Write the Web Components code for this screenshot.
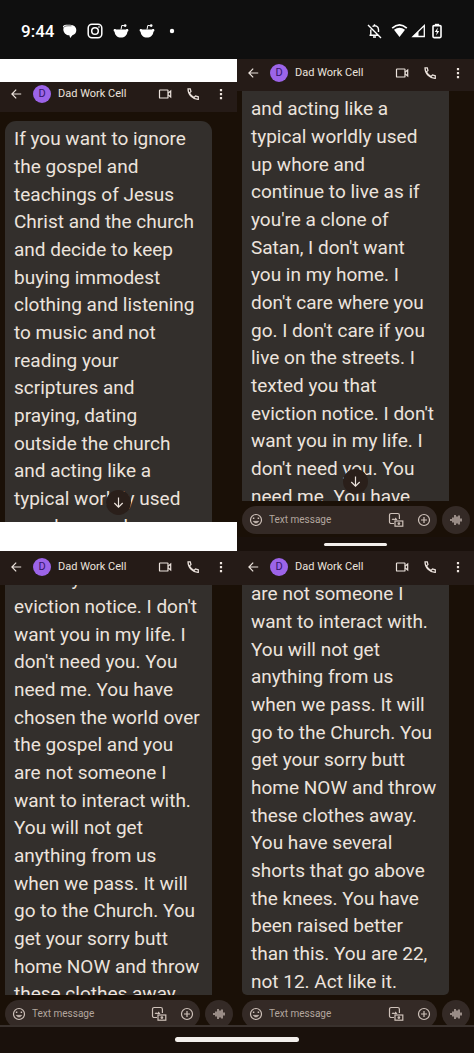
<!DOCTYPE html>
<html lang="en">
<head>
<meta charset="utf-8">
<meta name="viewport" content="width=device-width, initial-scale=1">
<title>Messages</title>
<style>
  html { background: #1a1007; }
  body { margin: 0; font-family: Roboto, "Noto Sans", sans-serif; color: #ece3dd; background: #1a1007; }
  main { display: grid; grid-template-columns: 1fr 1fr; }
  .cell { min-width: 0; background: #1a1007; }
  .first { background: #fff; padding: 23px 0 29px; }
  .first chat-header { --pad-top: 2px; --pad-bottom: 9px; }
  .second chat-header { --pad-top: 4px; --pad-bottom: 9px; }
</style>
</head>
<body>
<status-bar></status-bar>
<main>
  <section class="cell first">
    <chat-header name="Dad Work Cell"></chat-header>
    <chat-view style="--offset: 9px">
      <chat-bubble rounded="top" style="--lead: 4px">
        <p>If you want to ignore</p><p>the gospel and</p><p>teachings of Jesus</p><p>Christ and the church</p><p>and decide to keep</p><p>buying immodest</p><p>clothing and listening</p><p>to music and not</p><p>reading your</p><p>scriptures and</p><p>praying, dating</p><p>outside the church</p><p>and acting like a</p><p>typical worldly used</p><p>up whore and</p>
      </chat-bubble>
      <scroll-down slot="over"></scroll-down>
    </chat-view>
  </section>
  <section class="cell second">
    <chat-header name="Dad Work Cell"></chat-header>
    <chat-view>
      <chat-bubble style="--lead: 4px">
        <p>and acting like a</p><p>typical worldly used</p><p>up whore and</p><p>continue to live as if</p><p>you're a clone of</p><p>Satan, I don't want</p><p>you in my home. I</p><p>don't care where you</p><p>go. I don't care if you</p><p>live on the streets. I</p><p>texted you that</p><p>eviction notice. I don't</p><p>want you in my life. I</p><p>don't need you. You</p><p>need me. You have</p>
      </chat-bubble>
      <scroll-down slot="over"></scroll-down>
    </chat-view>
    <chat-composer></chat-composer>
    <home-bar style="--w: 63px; --h: 3px; --top: 4px; --bottom: 5px"></home-bar>
  </section>
  <section class="cell">
    <chat-header name="Dad Work Cell"></chat-header>
    <chat-view style="--offset: -20px">
      <chat-bubble>
        <p>texted you that</p><p>eviction notice. I don't</p><p>want you in my life. I</p><p>don't need you. You</p><p>need me. You have</p><p>chosen the world over</p><p>the gospel and you</p><p>are not someone I</p><p>want to interact with.</p><p>You will not get</p><p>anything from us</p><p>when we pass. It will</p><p>go to the Church. You</p><p>get your sorry butt</p><p>home NOW and throw</p><p>these clothes away.</p>
      </chat-bubble>
    </chat-view>
    <chat-composer cut></chat-composer>
  </section>
  <section class="cell">
    <chat-header name="Dad Work Cell"></chat-header>
    <chat-view style="--offset: -5px">
      <chat-bubble rounded="bottom">
        <p>are not someone I</p><p>want to interact with.</p><p>You will not get</p><p>anything from us</p><p>when we pass. It will</p><p>go to the Church. You</p><p>get your sorry butt</p><p>home NOW and throw</p><p>these clothes away.</p><p>You have several</p><p>shorts that go above</p><p>the knees. You have</p><p>been raised better</p><p>than this. You are 22,</p><p>not 12. Act like it.</p>
      </chat-bubble>
    </chat-view>
    <chat-composer cut></chat-composer>
  </section>
</main>
<home-bar style="--w: 124px; --h: 5px; --top: 10px; --bottom: 11px; --line: #39312d"></home-bar>

<script>
const define = (name, html) => customElements.define(name, class extends HTMLElement {
  constructor() {
    super();
    this.attachShadow({ mode: 'open' }).innerHTML = html;
  }
  connectedCallback() {
    const title = this.shadowRoot.querySelector('[data-name]');
    if (title) title.textContent = this.getAttribute('name');
  }
});

const reddit = `<svg width="16" height="16" viewBox="0 0 16 16"><path d="M.6 7.300C.6 6 2 5.600 3 6.400h10c1-.8 2.400-.4 2.400.9 0 .8-.5 1.200-1 1.500C14.200 12.300 11.500 14.600 8 14.600S1.800 12.300 1.600 8.800c-.5-.3-1-.7-1-1.500z" fill="#fff"/><path d="M8 6.500 8.800 2.400l3 .4" fill="none" stroke="#fff" stroke-width="1"/><circle cx="12.200" cy="2.600" r="1.300" fill="#fff"/></svg>`;

define('status-bar', `
<style>
  :host { display: flex; align-items: center; box-sizing: border-box; height: 59px; padding: 2px 31px 0 21px; background: #0f0f0f; color: #fff; }
  time { font: 500 17px Roboto, sans-serif; }
  .apps { display: flex; align-items: center; gap: 10px; margin-left: 8px; }
  .system { display: flex; align-items: center; gap: 3px; margin-left: auto; }
  .bell { margin-right: 6px; }
  .battery { margin-left: 2px; }
  svg { display: block; }
</style>
<time>9:44</time>
<div class="apps">
  <svg width="15" height="16" viewBox="0 0 15 16"><path d="M1 3.200C2 1.800 4 1.500 8 1.700c4 .1 6.300 2.300 6.300 5.500 0 2.600-1.500 4.400-3.900 5l-2.200 2.800-.9-2.700C4 12.300 1.600 10 1.200 6z" fill="#fff"/><path d="M.8 6.500C1 4 3 2.800 6 2.800h3.500" fill="none" stroke="#0f0f0f" stroke-width=".6"/></svg>
  <svg width="16" height="16" viewBox="0 0 16 16" fill="none" stroke="#fff" stroke-width="1.500"><rect x="1.200" y="1.200" width="13.600" height="13.600" rx="3.800"/><circle cx="8" cy="8" r="3.300"/><circle cx="12" cy="4" r=".4" stroke-width="1"/></svg>
  ${reddit}${reddit}
  <svg width="14" height="16" viewBox="0 0 14 16"><circle cx="7" cy="8" r="2.200" fill="#fff"/></svg>
</div>
<div class="system">
  <svg class="bell" width="15" height="16" viewBox="0 0 15 16" fill="none" stroke="#fff" stroke-width="1.400"><path d="M3.800 12V6.500M5.500 3.500C8 1.800 11.500 3 11.500 6.500V9M2.500 12.300H11M7.500 2.800V1.200M6 14h3M1 2l13 13"/></svg>
  <svg width="17" height="16" viewBox="0 0 17 16"><path d="M1.200 5.200Q8.500-1.500 15.800 5.200" fill="none" stroke="#fff" stroke-width="1.700"/><path d="M3 6.800Q8.500 2.500 14 6.800L8.500 14z" fill="#fff"/></svg>
  <svg width="15" height="16" viewBox="0 0 15 16"><path d="M13.300 2.500v11H2z" fill="none" stroke="#fff" stroke-width="1.300"/><path d="M2 13.500 7.500 8v5.500z" fill="#fff"/></svg>
  <svg class="battery" width="12" height="16" viewBox="0 0 12 16"><path d="M4 .8h4v1.500H4z" fill="#fff"/><rect x="2" y="2.600" width="8" height="12" rx="1" fill="none" stroke="#fff" stroke-width="1.600"/><path d="M6.800 4.500 3.800 9h2l-.6 3.500 3-4.500h-2z" fill="#fff"/></svg>
</div>`);

define('chat-header', `
<style>
  :host { display: block; background: #251b17; padding: var(--pad-top, 6px) 9px var(--pad-bottom, 9px) 10px; }
  header { display: flex; align-items: center; height: 19px; }
  button { display: block; padding: 0; border: 0; background: none; color: inherit; }
  svg { display: block; fill: none; stroke: currentColor; stroke-width: 1.200; }
  .avatar { width: 18px; height: 18px; margin: 0 7px 0 11px; border-radius: 50%; background: #9c64e8; color: #34156b; font-size: 11px; line-height: 18px; text-align: center; }
  h2 { margin: 0; font-size: 11px; font-weight: 400; line-height: 18px; white-space: nowrap; }
  .tools { display: flex; gap: 14px; margin-left: auto; }
</style>
<header>
  <button aria-label="Back"><svg width="12" height="14" viewBox="0 0 12 14"><path d="M11.200 7H2M6.200 2.700 1.900 7l4.300 4.300"/></svg></button>
  <div class="avatar">D</div>
  <h2 data-name></h2>
  <div class="tools">
    <button aria-label="Video call"><svg width="14" height="14" viewBox="0 0 14 14"><rect x="1.500" y="3" width="8.500" height="8" rx=".6"/><path d="M10 6.200 12.700 4v6L10 7.800"/></svg></button>
    <button aria-label="Call"><svg width="14" height="14" viewBox="0 0 14 14"><path d="M2 1.800h2.300l.7 2.700-1.500 1.400c1 2 2.500 3.500 4.600 4.600L9.500 9l2.800.8v2.500C7 12.500 1.800 7.500 2 1.800z"/></svg></button>
    <button aria-label="More options"><svg width="14" height="14" viewBox="0 0 14 14"><path d="M7 2v2.200M7 6v2.200M7 10v2.200" stroke-width="2.200"/></svg></button>
  </div>
</header>`);

define('chat-view', `
<style>
  :host { display: flow-root; position: relative; height: 410px; overflow: hidden; background: #1a1007; }
  .track { padding: 0 25px 0 5px; margin-top: var(--offset, 0); }
  .over { position: absolute; left: 0; right: 0; bottom: 7px; display: flex; justify-content: center; }
</style>
<div class="track"><slot></slot></div>
<div class="over"><slot name="over"></slot></div>`);

define('chat-bubble', `
<style>
  :host { display: block; padding: var(--lead, 0) 0 0 9px; background: #332f2c; font-size: 19px; }
  :host([rounded="top"]) { border-radius: 11px 11px 0 0; }
  :host([rounded="bottom"]) { border-radius: 0 0 5px 5px; }
  ::slotted(p) { margin: 0; line-height: 28px; white-space: nowrap; }
  ::slotted(p:nth-child(3n)) { line-height: 27px; }
</style>
<slot></slot>`);

define('scroll-down', `
<style>
  :host { display: block; }
  button { display: grid; place-items: center; width: 25px; height: 25px; padding: 0; border: 0; border-radius: 50%; background: #2a1f1a; color: inherit; }
  svg { display: block; fill: none; stroke: currentColor; stroke-width: 1.200; }
</style>
<button aria-label="Scroll to latest"><svg width="13" height="13" viewBox="0 0 13 13"><path d="M6.500 1.500v9.500M2.300 7l4.200 4.200L10.700 7"/></svg></button>`);

define('chat-composer', `
<style>
  :host { display: flex; gap: 5px; padding: 5px 4px 3px 5px; background: #1a1007; color: #cfc2ba; }
  :host([cut]) { height: 25px; padding-bottom: 0; overflow: hidden; }
  .pill { display: flex; align-items: center; flex: 1; min-width: 0; height: 28px; padding: 0 6px 0 7px; box-sizing: border-box; border-radius: 14px; background: #342a26; }
  input { flex: 1; width: 0; min-width: 0; margin: 0 0 0 6px; padding: 0; border: 0; outline: 0; background: none; color: inherit; font: 10px/16px Roboto, sans-serif; }
  input::placeholder { color: #b3a69e; opacity: 1; }
  button { display: grid; place-items: center; padding: 0; border: 0; background: none; color: inherit; }
  .voice { width: 28px; height: 28px; border-radius: 50%; background: #342a26; }
  .add { margin-left: 13px; }
  svg { display: block; fill: none; stroke: currentColor; stroke-width: 1.200; }
</style>
<div class="pill">
  <button aria-label="Emoji"><svg width="14" height="14" viewBox="0 0 14 14"><circle cx="7" cy="7" r="5.500"/><path d="M4.300 8.300c1 2.300 4.400 2.300 5.400 0z" fill="currentColor" stroke-width=".5"/><path d="M4.600 4.500v1.600M9.400 4.500v1.600" stroke-width="1.500"/></svg></button>
  <input type="text" aria-label="Text message" placeholder="Text message">
  <button aria-label="Gallery"><svg width="16" height="16" viewBox="0 0 16 16"><path d="M6 11.500H3.200c-.9 0-1.700-.7-1.700-1.600V3.200c0-.9.7-1.700 1.700-1.700h6.500c.9 0 1.700.7 1.700 1.700V7"/><path d="M3.500 8 5 6.300l1.200 1 1.500-1.800L9.500 8z" fill="currentColor" stroke="none"/><rect x="7" y="9" width="7.800" height="5.200"/><circle cx="10.900" cy="11.600" r=".8"/></svg></button>
  <button class="add" aria-label="Add"><svg width="14" height="14" viewBox="0 0 14 14"><circle cx="7" cy="7" r="5.500"/><path d="M7 4v6M4 7h6"/></svg></button>
</div>
<button class="voice" aria-label="Record voice"><svg width="14" height="14" viewBox="0 0 14 14"><path d="M2 6v2M4 4.500v5M6 2v10M8 3.500v7M10 2.500v9M12 5.500v3" stroke-width="1.300"/></svg></button>`);

define('home-bar', `
<style>
  :host { display: block; padding: var(--top) 0 var(--bottom); border-top: 2px solid var(--line, transparent); background: #1a110c; }
  div { width: var(--w); height: var(--h); margin: 0 auto; border-radius: 3px; background: #f3efec; }
</style>
<div></div>`);
</script>
</body>
</html>
